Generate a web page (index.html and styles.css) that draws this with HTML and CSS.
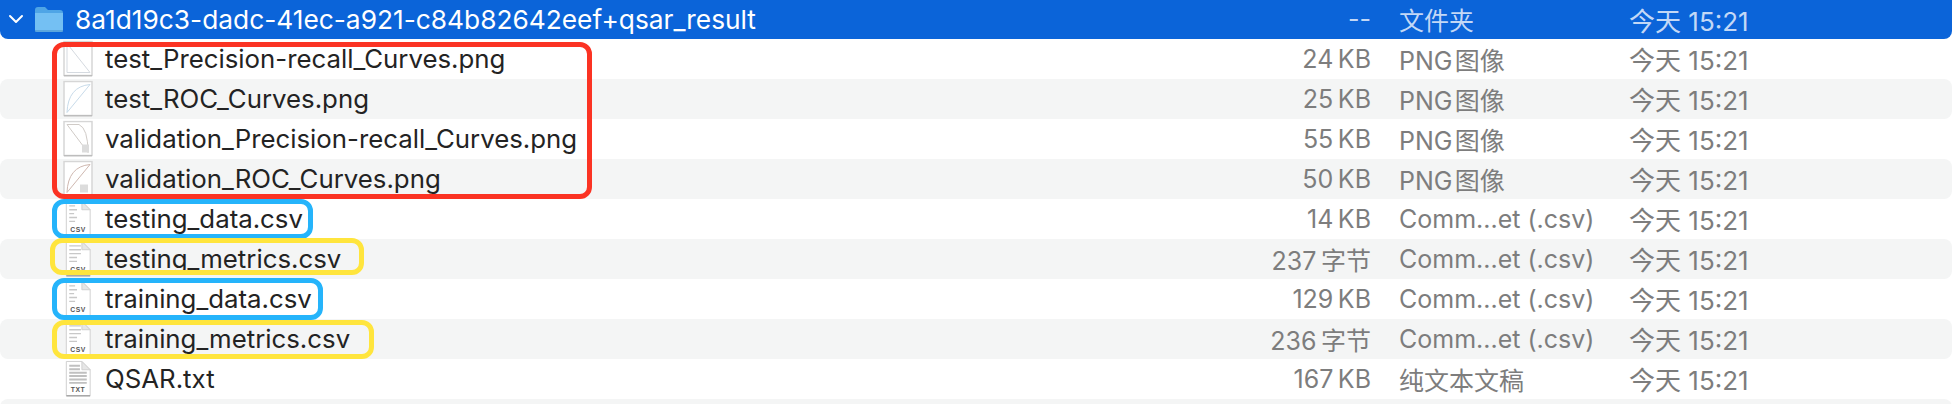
FILE: index.html
```html
<!DOCTYPE html>
<html lang="en">
<head>
    <meta charset="UTF-8">
    <meta name="viewport" content="width=device-width, initial-scale=1.0">
    <title>qsar_result</title>
    <link rel="stylesheet" href="styles.css">
</head>
<body>

<svg class="defs" width="0" height="0">
    <symbol id="thumb" viewBox="0 0 30 36">
        <rect x="1" y="1" width="28" height="34" fill="#fff" stroke="#d6d6d6" stroke-width="1.5"/>
        <path d="M1 35.500H29" stroke="#b5b5b5" stroke-width="1.5"/>
    </symbol>
    <symbol id="doc" viewBox="0 0 30 38">
        <path d="M3 1.500H19L27.500 10V36.500H3Z" fill="#fff" stroke="#d0d0d0" stroke-width="1"/>
        <path d="M19 1.500V10H27.500Z" fill="#e6e6e6" stroke="#d0d0d0" stroke-width="1"/>
        <path d="M3 36.800H27.500" stroke="#9a9a9a" stroke-width="1.2"/>
    </symbol>
</svg>

<div class="list">
    <div class="row selected">
        <svg class="chevron" viewBox="0 0 16 10"><path d="M2 2L8 8L14 2" fill="none" stroke="#fff" stroke-width="2" stroke-linecap="round" stroke-linejoin="round"/></svg>
        <svg class="folder" viewBox="0 0 30 30">
            <path d="M1 6Q1 3 4 3H11L14 6H26Q29 6 29 9V26Q29 28 27 28H3Q1 28 1 26Z" fill="#4fa5e6"/>
            <path d="M1 9H29V26Q29 28 27 28H3Q1 28 1 26Z" fill="#74c0f3"/>
            <path d="M1 27H29" stroke="#4b94cf" stroke-width="1.2"/>
        </svg>
        <span class="name">8a1d19c3-dadc-41ec-a921-c84b82642eef+qsar_result</span>
        <span class="size">--</span>
        <span class="kind">文件夹</span>
        <span class="date">今天 15:21</span>
    </div>

    <div class="row">
        <svg class="file" viewBox="0 0 30 36"><use href="#thumb"/><path d="M4 3L27 32M4 3V32H27" fill="none" stroke="#d5dae0" stroke-width="1"/></svg>
        <span class="name">test_Precision-recall_Curves.png</span>
        <span class="size">24&#8201;KB</span>
        <span class="kind">PNG&#8202;图像</span>
        <span class="date">今天 15:21</span>
    </div>
    <div class="row">
        <svg class="file" viewBox="0 0 30 36"><use href="#thumb"/><path d="M4 32L27 4M4 32Q5 6 27 4" fill="none" stroke="#c8dbea" stroke-width="1"/></svg>
        <span class="name">test_ROC_Curves.png</span>
        <span class="size">25&#8201;KB</span>
        <span class="kind">PNG&#8202;图像</span>
        <span class="date">今天 15:21</span>
    </div>
    <div class="row">
        <svg class="file" viewBox="0 0 30 36"><use href="#thumb"/><path d="M4 4L25 32M4 4H16Q25 8 25 32" fill="none" stroke="#d0cbc7" stroke-width="1"/><path d="M19 24H26V32H19Z" fill="#dcdcdc"/></svg>
        <span class="name">validation_Precision-recall_Curves.png</span>
        <span class="size">55&#8201;KB</span>
        <span class="kind">PNG&#8202;图像</span>
        <span class="date">今天 15:21</span>
    </div>
    <div class="row">
        <svg class="file" viewBox="0 0 30 36"><use href="#thumb"/><path d="M4 32L27 4M4 32Q5 6 27 4" fill="none" stroke="#cfb8b0" stroke-width="1"/><path d="M17 24H25V32H17Z" fill="#dcdcdc"/></svg>
        <span class="name">validation_ROC_Curves.png</span>
        <span class="size">50&#8201;KB</span>
        <span class="kind">PNG&#8202;图像</span>
        <span class="date">今天 15:21</span>
    </div>

    <div class="row">
        <svg class="file" viewBox="0 0 30 38"><use href="#doc"/><path d="M6 6H12M6 10H14M6 14H11M6 18H14M6 22H12" stroke="#c8c8c8" stroke-width="1.4"/><text class="tag" x="15" y="33">CSV</text></svg>
        <span class="name">testing_data.csv</span>
        <span class="size">14&#8201;KB</span>
        <span class="kind">Comm...et (.csv)</span>
        <span class="date">今天 15:21</span>
    </div>
    <div class="row">
        <svg class="file" viewBox="0 0 30 38"><use href="#doc"/><path d="M6 6H18M6 10H18M6 14H18M6 18H14M6 22H14" stroke="#c8c8c8" stroke-width="1.4"/><text class="tag" x="15" y="33">CSV</text></svg>
        <span class="name">testing_metrics.csv</span>
        <span class="size">237&#8201;字节</span>
        <span class="kind">Comm...et (.csv)</span>
        <span class="date">今天 15:21</span>
    </div>
    <div class="row">
        <svg class="file" viewBox="0 0 30 38"><use href="#doc"/><path d="M6 6H12M6 10H14M6 14H11M6 18H14M6 22H12" stroke="#c8c8c8" stroke-width="1.4"/><text class="tag" x="15" y="33">CSV</text></svg>
        <span class="name">training_data.csv</span>
        <span class="size">129&#8201;KB</span>
        <span class="kind">Comm...et (.csv)</span>
        <span class="date">今天 15:21</span>
    </div>
    <div class="row">
        <svg class="file" viewBox="0 0 30 38"><use href="#doc"/><path d="M6 6H18M6 10H18M6 14H18M6 18H14M6 22H14" stroke="#c8c8c8" stroke-width="1.4"/><text class="tag" x="15" y="33">CSV</text></svg>
        <span class="name">training_metrics.csv</span>
        <span class="size">236&#8201;字节</span>
        <span class="kind">Comm...et (.csv)</span>
        <span class="date">今天 15:21</span>
    </div>
    <div class="row">
        <svg class="file" viewBox="0 0 30 38"><use href="#doc"/><path d="M6 6H17M6 9.500H17M6 13H24M6 16.500H24M6 20H24M6 23.500H24" stroke="#c0c0c0" stroke-width="2"/><text class="tag" x="15" y="33">TXT</text></svg>
        <span class="name">QSAR.txt</span>
        <span class="size">167&#8201;KB</span>
        <span class="kind">纯文本文稿</span>
        <span class="date">今天 15:21</span>
    </div>
    <div class="row"></div>

    <!-- hand drawn marks over the list -->
    <div class="mark red mark-images"></div>
    <div class="mark blue mark-test-data"></div>
    <div class="mark yellow mark-test-metrics"></div>
    <div class="mark blue mark-train-data"></div>
    <div class="mark yellow mark-train-metrics"></div>
</div>

</body>
</html>
```

FILE: styles.css
```css
* {
    box-sizing: border-box;
}
body {
    margin: 0;
    background-color: #ffffff;
    overflow: hidden;
}
.defs {
    position: absolute;
}

/* File list */
.list {
    position: relative;
    width: 1952px;
    height: 404px;
    overflow: hidden;
    font-family: "Inter", "Noto Sans CJK SC", sans-serif;
    font-size: 25.8px;
}
.row {
    display: flex;
    align-items: center;
    height: 40px;
    padding-left: 63px;
    padding-bottom: 1px;
    border-radius: 8px;
    flex-shrink: 0;
}
.row:nth-child(odd) {
    background-color: #f4f5f5;
}
.row.selected {
    height: 39px;
    padding-left: 8px;
    background-color: #0b64d9;
    border-radius: 0 0 8px 8px;
}

/* Icons */
.chevron {
    width: 16px;
    height: 10px;
    margin-right: 10px;
}
.folder {
    width: 30px;
    height: 30px;
    margin-right: 11px;
}
.file {
    width: 30px;
    height: 37px;
    margin-right: 12px;
}
.tag {
    font-family: "Liberation Sans", sans-serif;
    font-size: 7px;
    font-weight: 700;
    fill: #555;
    text-anchor: middle;
    letter-spacing: 0.5px;
}

/* Columns */
.name {
    width: 1000px;
    flex: none;
    color: #232323;
    white-space: nowrap;
}
.selected .name {
    width: 1030px;
    font-size: 26.3px;
    color: #ffffff;
}
.size {
    width: 266px;
    flex: none;
    text-align: right;
    color: #7d7d7d;
    font-size: 25px;
}
.kind {
    width: 230px;
    flex: none;
    margin-left: 28px;
    color: #7d7d7d;
    font-size: 25px;
    white-space: nowrap;
}
.date {
    color: #7d7d7d;
    font-size: 26px;
    white-space: nowrap;
}
.selected .size,
.selected .kind,
.selected .date {
    color: #c3d8f6;
}

/* Coloured marks */
.mark {
    position: absolute;
    left: 52px;
    border: 5px solid;
    border-radius: 12px;
}
.red {
    border-color: #fb3323;
}
.blue {
    border-color: #25b4fb;
}
.yellow {
    border-color: #ffe53d;
}
.mark-images {
    top: 42px;
    width: 540px;
    height: 157px;
}
.mark-test-data {
    top: 199px;
    width: 261px;
    height: 40px;
}
.mark-test-metrics {
    top: 238px;
    left: 50px;
    width: 314px;
    height: 37px;
}
.mark-train-data {
    top: 278px;
    width: 271px;
    height: 42px;
}
.mark-train-metrics {
    top: 320px;
    width: 322px;
    height: 39px;
}
```
